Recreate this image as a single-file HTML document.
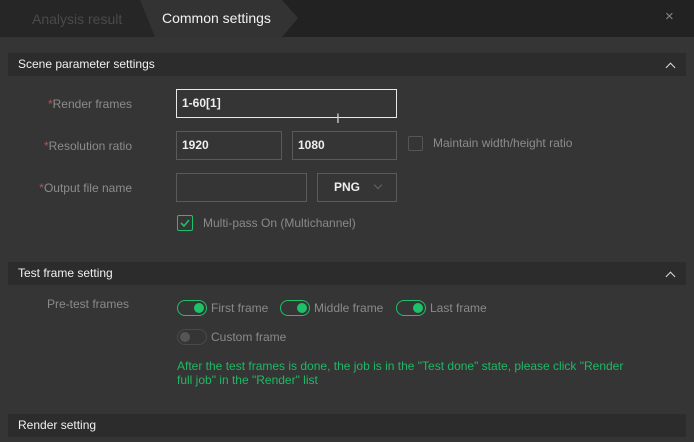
<!DOCTYPE html>
<html><head><style>
*{margin:0;padding:0;box-sizing:border-box}
body{width:694px;height:442px;overflow:hidden;background:#353535;font-family:"Liberation Sans",sans-serif;font-size:12px;color:#8a8a8a;position:relative}
.a{position:absolute}
.top{left:0;top:0;width:694px;height:37px;background:#222}
.hdr{left:8px;width:678px;height:23px;background:#2c2c2c;color:#f0f0f0;font-size:12px;padding-left:10px;line-height:23px}
.lbl{font-size:12px;color:#8c8c8c;text-align:right;width:120px;left:12px}
.lbl b{color:#c0504d;font-weight:normal}
.in{border:1px solid #5a5a5a;color:#eee;font-size:12px;font-weight:bold;padding-left:5px;line-height:27px;height:29px}
.tg{width:30px;height:16px;border:1px solid #1fc06a;border-radius:8px}
.tg i{position:absolute;right:2px;top:2px;width:10px;height:10px;border-radius:50%;background:#1fc06a}
.chev{width:7px;height:7px;border-left:1.5px solid #ddd;border-top:1.5px solid #ddd;transform:rotate(45deg)}
</style></head><body>
<div class="a top"></div>
<svg class="a" style="left:0;top:0" width="300" height="38"><polygon points="0,0 140,0 155,37 0,37" fill="#262626"/><polygon points="140,0 282,0 298,18 282,37 155,37" fill="#333"/></svg>
<div class="a" style="left:32px;top:11px;font-size:14px;color:#4a4a4a">Analysis result</div>
<div class="a" style="left:162px;top:10px;font-size:14px;color:#f2f2f2">Common settings</div>
<div class="a" style="left:665px;top:8px;font-size:15px;color:#888">×</div>

<div class="a hdr" style="top:53px">Scene parameter settings</div>
<div class="a chev" style="left:667px;top:64px"></div>
<div class="a lbl" style="top:97px"><b>*</b>Render frames</div>
<div class="a in" style="left:176px;top:89px;width:221px;border-color:#e8e8e8">1-60[1]</div>
<div class="a" style="left:336px;top:110px;color:#ccc;font-size:14px">I</div>
<div class="a lbl" style="top:139px"><b>*</b>Resolution ratio</div>
<div class="a in" style="left:176px;top:131px;width:106px">1920</div>
<div class="a in" style="left:292px;top:131px;width:105px">1080</div>
<div class="a" style="left:408px;top:136px;width:15px;height:15px;border:1px solid #555;border-radius:2px"></div>
<div class="a" style="left:433px;top:136px;color:#8c8c8c">Maintain width/height ratio</div>
<div class="a lbl" style="top:181px"><b>*</b>Output file name</div>
<div class="a in" style="left:176px;top:173px;width:131px"></div>
<div class="a in" style="left:317px;top:173px;width:80px;padding-left:16px">PNG</div>
<div class="a" style="left:375px;top:182px;width:6px;height:6px;border-right:1px solid #666;border-bottom:1px solid #666;transform:rotate(45deg)"></div>
<div class="a" style="left:177px;top:215px;width:16px;height:16px;border:1px solid #1fc06a;border-radius:2px"></div>
<svg class="a" style="left:177px;top:215px" width="16" height="16"><path d="M4 8 L7 11 L12 5" stroke="#1fc06a" stroke-width="1.6" fill="none"/></svg>
<div class="a" style="left:203px;top:216px">Multi-pass On (Multichannel)</div>

<div class="a hdr" style="top:262px">Test frame setting</div>
<div class="a chev" style="left:667px;top:273px"></div>
<div class="a" style="left:47px;top:297px">Pre-test frames</div>
<div class="a tg" style="left:177px;top:300px"><i></i></div>
<div class="a" style="left:211px;top:301px">First frame</div>
<div class="a tg" style="left:280px;top:300px"><i></i></div>
<div class="a" style="left:314px;top:301px">Middle frame</div>
<div class="a tg" style="left:396px;top:300px"><i></i></div>
<div class="a" style="left:430px;top:301px">Last frame</div>
<div class="a tg" style="left:177px;top:329px;border-color:#4a4a4a"><i style="left:2px;right:auto;background:#555"></i></div>
<div class="a" style="left:211px;top:330px">Custom frame</div>
<div class="a" style="left:177px;top:359px;color:#1fb864;line-height:14px;width:450px">After the test frames is done, the job is in the "Test done" state, please click "Render full job" in the "Render" list</div>

<div class="a hdr" style="top:414px">Render setting</div>
</body></html>
